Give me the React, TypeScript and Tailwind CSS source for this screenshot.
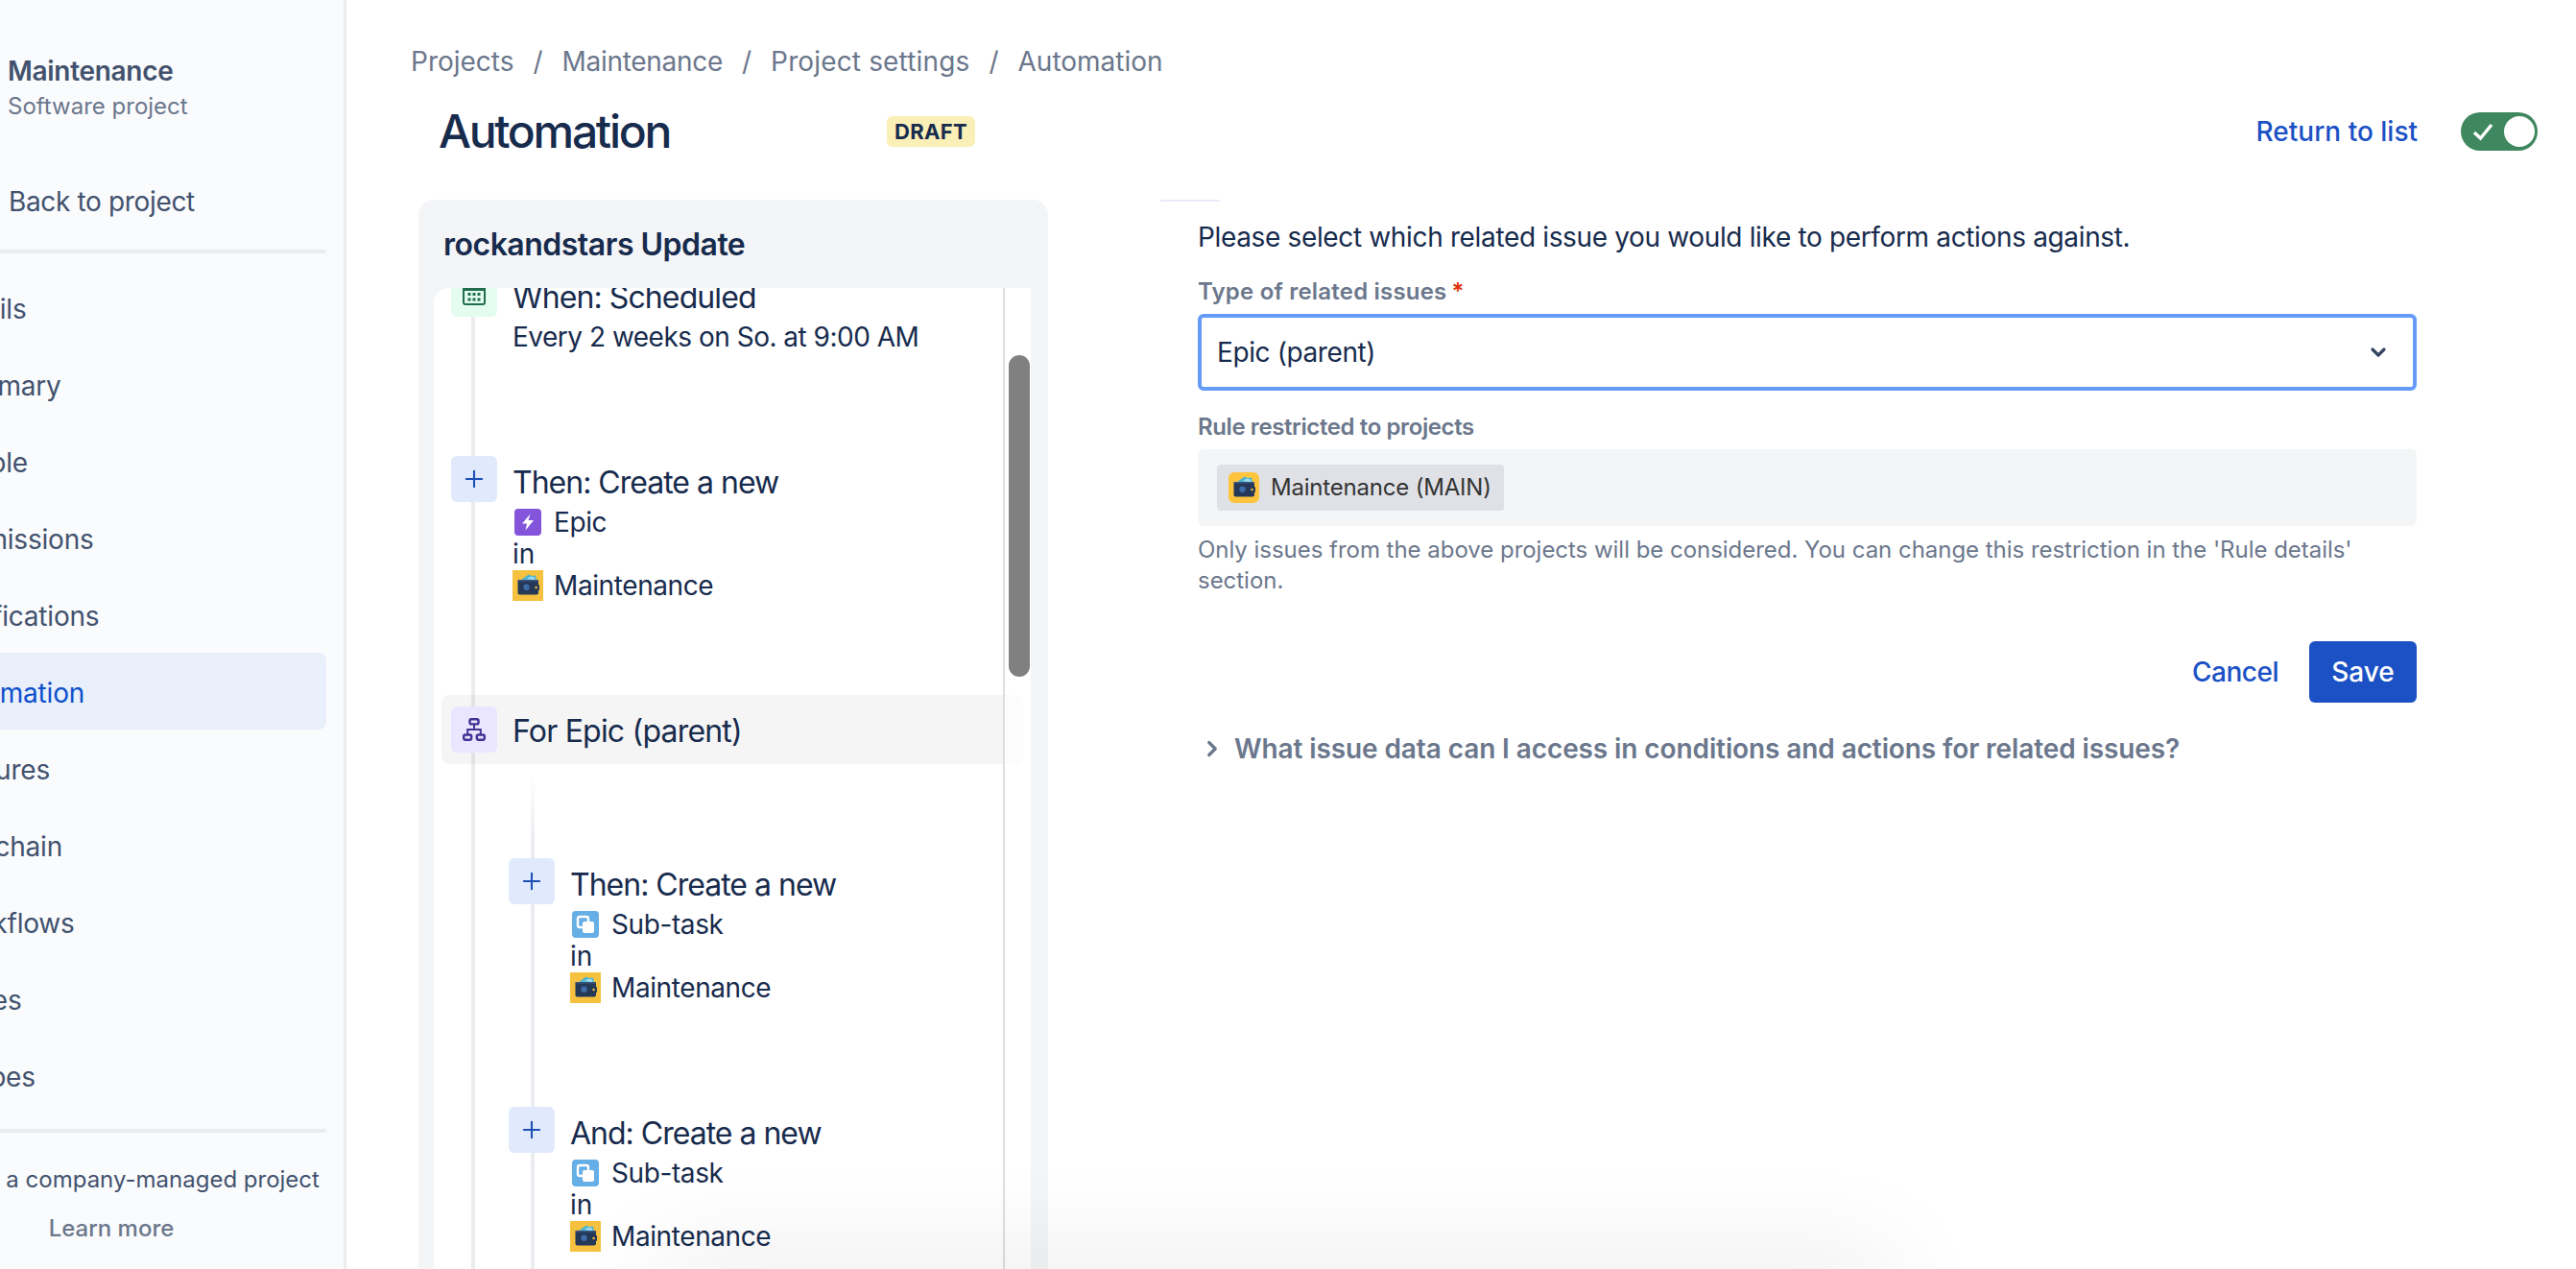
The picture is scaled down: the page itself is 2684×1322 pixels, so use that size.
import { ReactNode } from "react";
import { ChevronDown, ChevronRight, Plus } from "lucide-react";

const navItems = [
  "Details",
  "Summary",
  "People",
  "Permissions",
  "Notifications",
  "Automation",
  "Features",
  "Toolchain",
  "Workflows",
  "Issues",
  "Scopes",
];

function WalletArt() {
  return (
    <svg viewBox="0 0 32 32" className="w-[32px] h-[32px]">
      <path d="M8 11 L13 7 L17 4.5 L20 6 L24 5.5 L25 11 Z" fill="#4FB3D1" />
      <path d="M15 9 L19 6.5 L23 7.5 L23.5 10.5 Z" fill="#9ADBEE" />
      <rect x="5.5" y="10" width="21.5" height="15.5" rx="2" fill="#253858" />
      <rect x="5.5" y="10" width="21.5" height="1.6" fill="#3A5380" />
      <circle cx="14.5" cy="17.8" r="3.2" fill="#3E6AA8" />
      <rect x="22.5" y="15" width="5.5" height="6" rx="1" fill="#253858" />
      <circle cx="24.6" cy="18" r="1.2" fill="#F6C23E" />
    </svg>
  );
}

function EpicIcon() {
  return (
    <span className="w-[28px] h-[28px] rounded-[4px] bg-[#8455DB] flex items-center justify-center shrink-0">
      <svg viewBox="0 0 28 28" className="w-[28px] h-[28px]">
        <path d="M16.5 5.5 L8 15.5 H13 L11.5 22.5 L20 12 H14.5 Z" fill="#fff" />
      </svg>
    </span>
  );
}

function SubtaskIcon() {
  return (
    <span className="w-[28px] h-[28px] rounded-[4px] bg-[#65AEE6] flex items-center justify-center shrink-0">
      <svg viewBox="0 0 28 28" className="w-[28px] h-[28px]">
        <rect x="6" y="6" width="11" height="11" rx="2" fill="none" stroke="#fff" strokeWidth="2.4" />
        <rect x="11" y="11" width="12" height="12" rx="2" fill="#fff" />
      </svg>
    </span>
  );
}

function IconBox({ tone, children }: { tone: string; children: ReactNode }) {
  return (
    <span className={`relative w-[48px] h-[48px] rounded-[6px] flex items-center justify-center shrink-0 ${tone}`}>
      {children}
    </span>
  );
}

function CreateStep({ title, typeLabel, typeIcon }: { title: string; typeLabel: string; typeIcon: ReactNode }) {
  return (
    <div className="flex h-[259px]">
      <IconBox tone="bg-[#E0EAFC]">
        <Plus size={28} strokeWidth={1.8} className="text-[#1D4FB5]" />
      </IconBox>
      <div className="ml-[16px] flex flex-col">
        <div className="h-[52px] pt-[8px] text-[32px] leading-[40px] tracking-[-1px]">{title}</div>
        <div className="h-[34px] flex items-center gap-[13px] pl-[2px] text-[28px] tracking-[-0.4px]">
          {typeIcon}
          <span>{typeLabel}</span>
        </div>
        <div className="h-[32px] text-[28px] leading-[32px]">in</div>
        <div className="h-[34px] flex items-center gap-[11px] text-[28px] tracking-[-0.4px]">
          <span className="w-[32px] h-[32px] bg-[#F5C13E] shrink-0">
            <WalletArt />
          </span>
          <span>Maintenance</span>
        </div>
      </div>
    </div>
  );
}

function Sidebar() {
  return (
    <aside className="w-[361px] h-full shrink-0 bg-[#FAFBFD] border-r-[3px] border-[#EBECF0] overflow-hidden text-[#42526E]">
      <div className="pl-[8px] pt-[56px] h-[190px]">
        <div className="text-[28px] leading-[36px] font-semibold tracking-[-0.3px]">Maintenance</div>
        <div className="mt-[3px] text-[24px] leading-[32px] text-[#6B778C]">Software project</div>
      </div>
      <div className="pl-[9px] text-[28px] leading-[40px] h-[70px] tracking-[-0.35px]">Back to project</div>
      <div className="w-[340px] h-[4px] bg-[#EBECF0] rounded-r-[2px]" />
      <nav className="mt-[16px]">
        {navItems.map((item) => (
          <div
            key={item}
            className={`w-[340px] h-[80px] flex items-center overflow-hidden rounded-r-[8px] text-[28px] tracking-[-0.2px] whitespace-nowrap ${
              item === "Automation" ? "bg-[#E9EFFB] text-[#0C4FCB]" : ""
            }`}
          >
            <span className="-ml-[61px] pt-[3px]">{item}</span>
          </div>
        ))}
      </nav>
      <div className="mt-[16px] w-[340px] h-[4px] bg-[#EBECF0] rounded-r-[2px]" />
      <div className="mt-[33px] -ml-[100px] w-[430px] text-center whitespace-nowrap text-[24px] leading-[32px]">
        You're in a company-managed project
      </div>
      <div className="mt-[19px] w-[232px] text-center text-[24px] leading-[32px] text-[#6B778C] font-medium">
        Learn more
      </div>
    </aside>
  );
}

function RulePanel() {
  return (
    <section className="ml-[75px] w-[656px] h-[1200px] shrink-0 bg-[#F4F5F7] rounded-t-[16px] flex flex-col">
      <h2 className="h-[92px] pl-[26px] pt-[27px] text-[32px] leading-[40px] font-semibold tracking-[-0.5px] text-[#172B4D]">
        rockandstars Update
      </h2>
      <div className="relative ml-[16px] w-[622px] flex-1 bg-white rounded-tl-[16px] overflow-hidden text-[#172B4D]">
        <div className="absolute left-[39px] top-[30px] h-[1000px] w-[4px] bg-[#EBECF0]" />
        <div className="absolute left-[101px] top-[507px] h-[600px] w-[4px] bg-gradient-to-b from-white to-[#EBECF0] to-[12%]" />
        <div className="relative -mt-[18px] pl-[18px]">
          <div className="flex h-[193px]">
            <IconBox tone="bg-[#E3FCEF]">
              <svg viewBox="0 0 24 24" className="w-[24px] h-[24px]">
                <rect x="1" y="2" width="22" height="21" rx="2" fill="none" stroke="#216E4E" strokeWidth="2" />
                <rect x="1" y="2" width="22" height="7" fill="#216E4E" />
                <g fill="#216E4E">
                  <rect x="5.5" y="11" width="3" height="3" />
                  <rect x="10.5" y="11" width="3" height="3" />
                  <rect x="15.5" y="11" width="3" height="3" />
                  <rect x="5.5" y="16.5" width="3" height="3" />
                  <rect x="10.5" y="16.5" width="3" height="3" />
                  <rect x="15.5" y="16.5" width="3" height="3" />
                </g>
              </svg>
            </IconBox>
            <div className="ml-[16px]">
              <div className="h-[40px] mt-[8px] text-[32px] leading-[40px] tracking-[-0.9px]">When: Scheduled</div>
              <div className="mt-[1px] text-[28px] leading-[40px] tracking-[-0.5px]">Every 2 weeks on So. at 9:00 AM</div>
            </div>
          </div>
          <CreateStep title="Then: Create a new" typeLabel="Epic" typeIcon={<EpicIcon />} />
          <div className="-ml-[10px] -mt-[10px] w-[607px] h-[72px] bg-black/[0.04] rounded-[8px] flex items-center pl-[10px]">
            <IconBox tone="bg-[#EAE6FF]">
              <svg viewBox="0 0 24 24" className="w-[24px] h-[24px]" fill="none" stroke="#403294" strokeWidth="2.4">
                <rect x="7.5" y="1.2" width="9" height="5.2" rx="1.6" />
                <rect x="1.2" y="17.5" width="8" height="5.2" rx="1.6" />
                <rect x="14.8" y="17.5" width="8" height="5.2" rx="1.6" />
                <path d="M12 6.4 V12 M5.2 17.5 V12 H18.8 V17.5" strokeWidth="2" />
              </svg>
            </IconBox>
            <span className="ml-[16px] pt-[3px] text-[32px] leading-[40px] tracking-[-0.8px]">For Epic (parent)</span>
          </div>
          <div className="pl-[60px] pt-[98px]">
            <CreateStep title="Then: Create a new" typeLabel="Sub-task" typeIcon={<SubtaskIcon />} />
            <CreateStep title="And: Create a new" typeLabel="Sub-task" typeIcon={<SubtaskIcon />} />
          </div>
        </div>
        <div className="absolute right-0 top-0 bottom-0 w-[29px] border-l-[2px] border-l-[#DEDEDE] bg-white/70">
          <div className="mt-[70px] ml-[4px] w-[22px] h-[335px] rounded-[11px] bg-[#808080]" />
        </div>
      </div>
    </section>
  );
}

function RelatedIssueForm() {
  return (
    <section className="ml-[156px] w-[1270px] shrink-0">
      <div className="-ml-[39px] w-[62px] h-[2px] bg-[#EDEAFB]" />
      <p className="mt-[17px] text-[28px] leading-[40px] tracking-[-0.35px] text-[#172B4D]">
        Please select which related issue you would like to perform actions against.
      </p>
      <div className="mt-[21px] h-[32px] text-[24px] leading-[32px] font-semibold tracking-[0.2px] text-[#6B778C]">
        Type of related issues<span className="ml-[5px] text-[#DE350B]">*</span>
      </div>
      <div className="mt-[7px] h-[80px] border-[4px] border-[#649BF6] rounded-[6px] flex items-center pl-[16px] pr-[24px] text-[28px] tracking-[-0.4px] text-[#172B4D]">
        <span className="flex-1">Epic (parent)</span>
        <ChevronDown size={24} strokeWidth={3.2} className="text-[#344563]" />
      </div>
      <div className="mt-[22px] h-[32px] text-[24px] leading-[32px] font-semibold tracking-[-0.4px] text-[#6B778C]">
        Rule restricted to projects
      </div>
      <div className="mt-[7px] h-[80px] bg-[#F4F5F7] rounded-[6px] flex items-center pl-[20px]">
        <div className="h-[48px] bg-[#DFE1E6] rounded-[4px] flex items-center pl-[12px] pr-[13px] gap-[12px]">
          <span className="w-[32px] h-[32px] bg-[#FFC43D] rounded-[6px] overflow-hidden">
            <WalletArt />
          </span>
          <span className="text-[24px] tracking-[-0.2px] text-[#333333]">Maintenance (MAIN)</span>
        </div>
      </div>
      <p className="mt-[9px] text-[24px] leading-[32px] tracking-[-0.03px] text-[#6B778C]">
        Only issues from the above projects will be considered. You can change this restriction in the 'Rule details'
        section.
      </p>
      <div className="mt-[47px] flex items-center justify-end">
        <span className="text-[28px] font-medium tracking-[-0.5px] text-[#1B51C4]">Cancel</span>
        <button className="ml-[32px] w-[112px] h-[64px] rounded-[6px] bg-[#1B51C4] text-white text-[28px] font-medium">
          Save
        </button>
      </div>
      <div className="mt-[28px] flex items-center text-[#6B778C]">
        <ChevronRight size={26} strokeWidth={3} className="ml-[2px]" />
        <span className="ml-[10px] text-[28px] leading-[40px] font-semibold tracking-[-0.1px]">
          What issue data can I access in conditions and actions for related issues?
        </span>
      </div>
    </section>
  );
}

export default function App() {
  return (
    <div className="relative w-[2684px] h-[1322px] overflow-hidden bg-white flex font-['Inter',sans-serif]">
      <Sidebar />
      <main className="flex-1 min-w-0 flex flex-col">
        <div className="mt-[44px] h-[40px] pl-[67px] flex items-center gap-[20px] text-[28px] text-[#6B778C]">
          <span>Projects</span>
          <span>/</span>
          <span className="tracking-[-0.3px]">Maintenance</span>
          <span>/</span>
          <span className="tracking-[0.15px]">Project settings</span>
          <span>/</span>
          <span>Automation</span>
        </div>
        <div className="mt-[23px] h-[60px] pl-[96px] pr-[40px] flex items-center">
          <h1 className="w-[467px] text-[48px] leading-[60px] font-medium tracking-[-2.3px] text-[#172B4D]">Automation</h1>
          <span className="w-[92px] h-[32px] rounded-[6px] bg-[#FBEFB8] flex items-center justify-center text-[22px] font-bold tracking-[0.3px] text-[#172B4D]">
            DRAFT
          </span>
          <span className="ml-auto text-[28px] font-medium text-[#1B51C4]">Return to list</span>
          <span className="relative ml-[45px] w-[80px] h-[40px] rounded-full bg-[#3F875E] flex items-center pl-[11px]">
            <svg viewBox="0 0 24 24" className="w-[24px] h-[24px]" fill="none" stroke="#fff" strokeWidth="3.4">
              <path d="M3 13 L9.5 19 L21 5" />
            </svg>
            <span className="absolute right-[3px] top-[4px] w-[32px] h-[32px] rounded-full bg-white" />
          </span>
        </div>
        <div className="mt-[41px] flex flex-1 min-h-0">
          <RulePanel />
          <RelatedIssueForm />
        </div>
      </main>
      <div className="absolute top-[1322px] left-[690px] w-[1280px] h-[40px] rounded-t-[20px] shadow-[0_0_110px_rgba(0,0,0,0.15)]" />
    </div>
  );
}
